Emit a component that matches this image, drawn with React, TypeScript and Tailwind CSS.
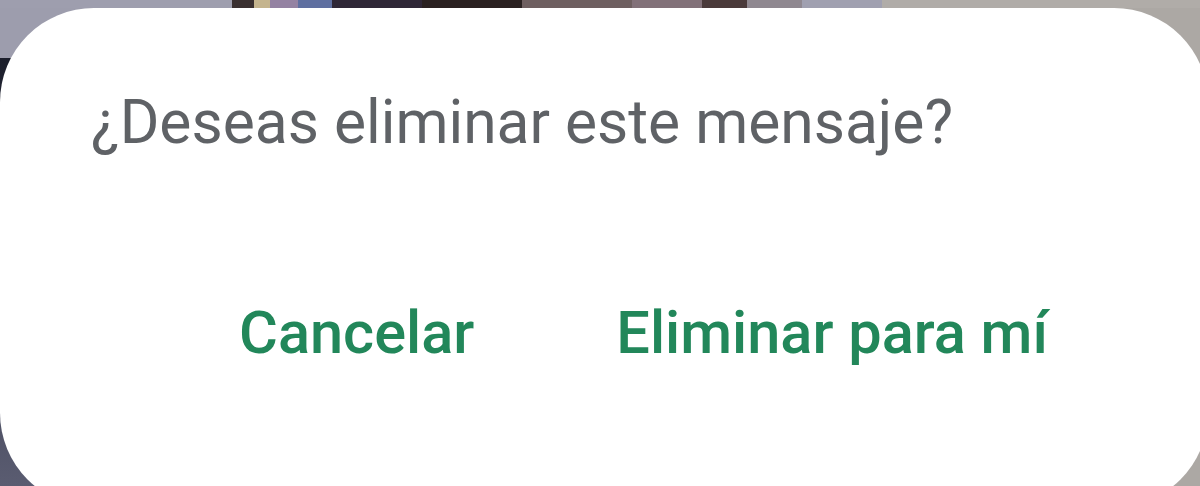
export default function App() {
  return (
    <div className="relative w-[1200px] h-[486px] overflow-hidden bg-[#aca8a4] font-['Roboto',sans-serif]">
      {/* backdrop: blurred chat behind the dialog */}
      <div className="flex flex-col h-full">
        <div className="flex h-[8px]">
          <div className="w-[232px] bg-[#9e9eae]" />
          <div className="w-[22px] bg-[#3a3030]" />
          <div className="w-[16px] bg-[#c4b48e]" />
          <div className="w-[28px] bg-[#9482a2]" />
          <div className="w-[34px] bg-[#5f6fa0]" />
          <div className="w-[90px] bg-[#2f2737]" />
          <div className="w-[100px] bg-[#2a2121]" />
          <div className="w-[110px] bg-[#6e5f60]" />
          <div className="w-[70px] bg-[#827179]" />
          <div className="w-[45px] bg-[#4a3a3a]" />
          <div className="w-[55px] bg-[#8f8890]" />
          <div className="w-[80px] bg-[#a0a0b0]" />
          <div className="flex-1 bg-[#b0aca8]" />
        </div>
        <div className="flex flex-1">
          <div className="w-[120px] flex flex-col">
            <div className="h-[50px] bg-[#9d9dad]" />
            <div className="flex-1 bg-gradient-to-b from-[#1c1f2c] to-[#5a5c71]" />
          </div>
          <div className="flex-1" />
        </div>
      </div>

      {/* dialog */}
      <div className="absolute top-[8px] left-0 w-[1208px] h-[499px] rounded-[94px] bg-white">
        <div className="pl-[91px] pt-[77px] text-[60.5px] leading-[76px] text-[#5f6266]">
          ¿Deseas eliminar este mensaje?
        </div>
        <div className="flex justify-end gap-[142px] pr-[160px] pt-[137px] text-[59.5px] leading-[70px] font-medium text-[#22875a]">
          <span>Cancelar</span>
          <span>Eliminar para mí</span>
        </div>
      </div>
    </div>
  );
}
